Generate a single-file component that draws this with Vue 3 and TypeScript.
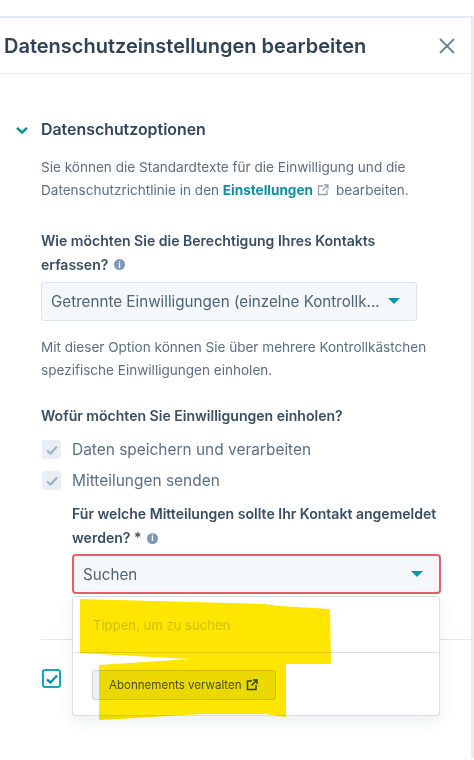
<script setup lang="ts">
const options: string[] = ['Daten speichern und verarbeiten', 'Mitteilungen senden']
</script>

<template>
  <div class="page">
    <section class="panel">
      <header class="head">
        <h1>Datenschutzeinstellungen bearbeiten</h1>
        <svg class="close" viewBox="0 0 16 16" width="16" height="16"><path d="M1 1l14 14M15 1L1 15" /></svg>
      </header>
      <div class="content">
        <div class="section-title">
          <svg class="chev" viewBox="0 0 12 7" width="12" height="7"><path d="M1 1l5 4.5L11 1" /></svg>
          <h2>Datenschutzoptionen</h2>
        </div>
        <p class="text intro">
          Sie können die Standardtexte für die Einwilligung und die<br />
          Datenschutzrichtlinie in den <a>Einstellungen</a>
          <svg class="ext" viewBox="0 0 12 12" width="12" height="12"><path d="M6 2H1.5v8.5H10V6M7 1h4v4M11 1L5.5 6.5" /></svg>
          <span class="after">bearbeiten.</span>
        </p>
        <div class="label first">Wie möchten Sie die Berechtigung Ihres Kontakts<br />erfassen?<span class="info">i</span></div>
        <div class="select wide">
          <span>Getrennte Einwilligungen (einzelne Kontrollk...</span><i class="caret"></i>
        </div>
        <p class="text help">Mit dieser Option können Sie über mehrere Kontrollkästchen<br />spezifische Einwilligungen einholen.</p>
        <div class="label single">Wofür möchten Sie Einwilligungen einholen?</div>
        <ul class="checks">
          <li v-for="o in options" :key="o">
            <span class="box"><svg viewBox="0 0 12 10" width="12" height="10"><path d="M1 5.5l3.5 3L11 1.5" /></svg></span>
            {{ o }}
          </li>
        </ul>
        <div class="nested">
          <div class="label">Für welche Mitteilungen sollte Ihr Kontakt angemeldet<br />werden? *<span class="info">i</span></div>
          <div class="select error"><span>Suchen</span><i class="caret"></i></div>
          <div class="menu">
            <div class="search">Tippen, um zu suchen</div>
            <div class="actions">
              <button type="button">Abonnements verwalten
                <svg viewBox="0 0 12 12" width="12" height="12"><path d="M6 2H1.5v8.5H10V6M7 1h4v4M11 1L5.5 6.5" /></svg>
              </button>
            </div>
          </div>
        </div>
        <div class="foot">
          <hr />
          <span class="box on"><svg viewBox="0 0 12 10" width="12" height="10"><path d="M1 5.5l3.5 3L11 1.5" /></svg></span>
        </div>
      </div>
    </section>
    <svg class="marker" viewBox="0 0 474 760" width="474" height="760">
      <path d="M80 599L265 604L280 606L330 609L331 664L286 664L286 717L265 714L200 714L120 719L99 720L99 665L190 659L80 653Z" />
    </svg>
  </div>
</template>

<style>
html, body { margin: 0; background: #fff; }
</style>

<style scoped>
.page { position: relative; width: 474px; height: 760px; overflow: hidden; padding-top: 16px; box-sizing: border-box; font-family: Inter, "Noto Sans", sans-serif; color: #33475b; filter: blur(.35px); }
.panel { border-top: 2px solid #e3e7ef; border-right: 3px solid #e9ecf1; height: 742px; box-sizing: border-box; }
.head { height: 55px; border-bottom: 1px solid #e8ebf1; display: flex; align-items: center; justify-content: space-between; padding: 0 16px 0 4px; }
h1 { margin: 0; font-size: 20px; font-weight: 600; color: #2f4256; }
.close { fill: none; stroke: #6d8297; stroke-width: 1.8; }
.content { padding: 46px 0 0 16px; }
.section-title { display: flex; align-items: center; gap: 13px; }
.chev { fill: none; stroke: #0a8d99; stroke-width: 2.4; }
h2 { margin: 0; font-size: 15.9px; font-weight: 600; line-height: 20px; color: #33475b; }
.text { margin: 0; font-size: 13.55px; line-height: 23.3px; color: #5c6f83; }
.intro { margin: 16px 0 0 25px; }
.intro a { color: #0f8fa5; font-weight: 700; }
.ext { fill: none; stroke: #8fa3b8; stroke-width: 1.3; vertical-align: -1px; margin: 0 7px 0 4px; }
.label { font-size: 14.05px; font-weight: 600; line-height: 24px; color: #3a4d61; }
.first { margin: 26px 0 0 25px; }
.info { display: inline-flex; align-items: center; justify-content: center; width: 11px; height: 11px; border-radius: 50%; background: #7c98b6; color: #fff; font-size: 9px; font-weight: 700; margin-left: 5.5px; vertical-align: 2px; }
.select { box-sizing: border-box; display: flex; align-items: center; justify-content: space-between; background: #f5f8fa; border: 1px solid #dbe3ec; border-radius: 3px; font-size: 15.2px; color: #4f6478; }
.wide { margin: 5px 0 0 25px; width: 376px; height: 39px; padding: 0 16px 0 9px; }
.caret { width: 0; height: 0; border: 6px solid transparent; border-top: 6px solid #0a98a8; border-bottom: 0; flex: none; }
.help { margin: 15px 0 0 25px; }
.single { margin: 22px 0 0 25px; }
.checks { list-style: none; margin: 6px 0 0 26px; padding: 0; }
.checks li { display: flex; align-items: center; gap: 11px; height: 31px; font-size: 15.45px; color: #5c6f83; }
.box { flex: none; box-sizing: border-box; width: 19px; height: 19px; border-radius: 3px; background: #e9eef4; display: flex; align-items: center; justify-content: center; }
.box svg { fill: none; stroke: #a0b1c3; stroke-width: 2.2; }
.nested { position: relative; margin: 6px 0 0 56px; height: 130px; }
.error { margin-top: 4px; width: 369px; height: 40px; padding: 0 16px 0 9px; border: 2px solid #e2606a; border-radius: 4px; }
.menu { position: absolute; z-index: 2; top: 94px; left: 0; width: 368px; height: 120px; box-sizing: border-box; background: #fff; border: 1px solid #d8dfe8; border-radius: 3px; box-shadow: 0 6px 16px rgba(45,62,80,.09); }
.search { height: 56px; border-bottom: 1px solid #d8dfe8; padding-left: 20px; line-height: 57px; font-size: 13.1px; color: #cdd6e0; box-sizing: border-box; }
.actions { padding: 17px 0 0 19px; }
button { display: flex; align-items: center; gap: 4px; box-sizing: border-box; width: 184px; height: 30px; padding: 0 0 0 16px; background: #eaf0f6; border: 1px solid #ccd6e2; border-radius: 3px; font: 400 11.55px Inter, sans-serif; color: #4a5a60; }
button svg { fill: none; stroke: #33475b; stroke-width: 1.5; }
.foot { position: relative; margin: 7px 0 0 25px; }
hr { margin: 0; border: 0; border-top: 1px solid #e3e7ef; }
.box.on { margin: 29px 0 0 1px; background: #fff; border: 2px solid #1ba3bd; }
.box.on svg { stroke: #0f8fb0; stroke-width: 2.4; }
.marker { position: absolute; inset: 0; z-index: 5; mix-blend-mode: multiply; pointer-events: none; }
.marker path { fill: #ffe600; }
</style>
